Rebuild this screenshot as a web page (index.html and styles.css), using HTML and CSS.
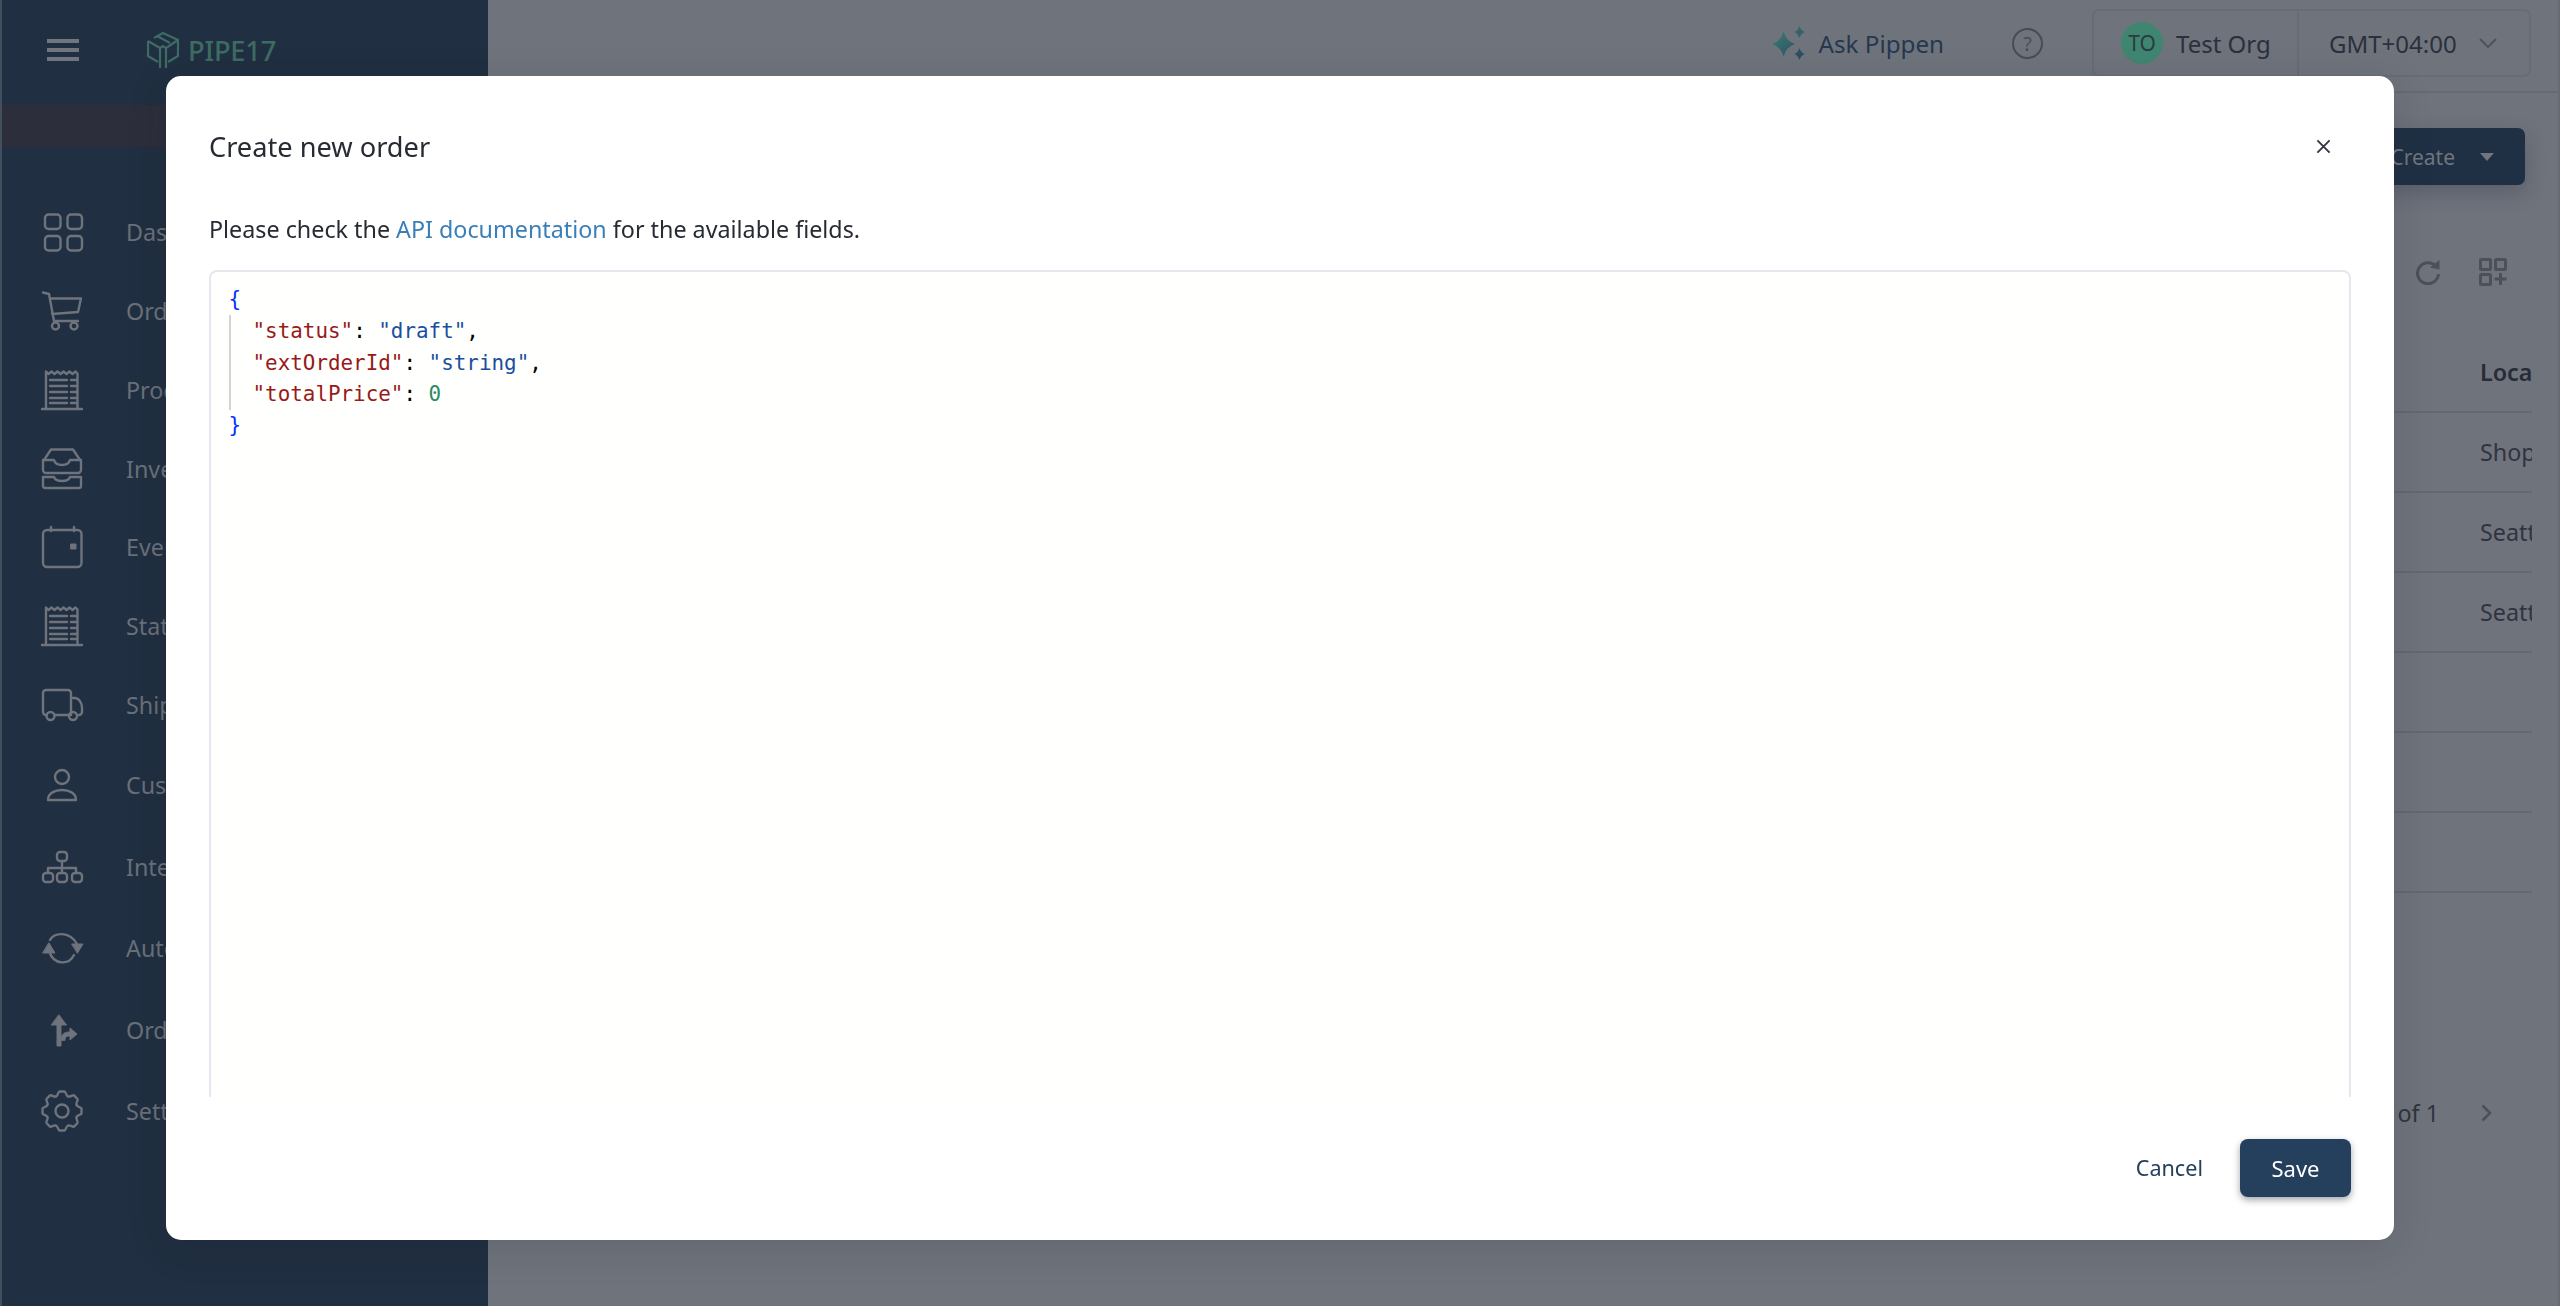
FILE: index.html
```html
<!DOCTYPE html>
<html lang="en">
<head>
<meta charset="utf-8">
<title>Create new order</title>
<link rel="stylesheet" href="styles.css">
</head>
<body>
<aside class="sidebar">
  <div class="brand">
    <div class="burger"><span></span><span></span><span></span></div>
    <div class="logo">
      <svg class="logo-mark" viewBox="0 0 32 37" fill="none" stroke="currentColor" stroke-width="2.2">
        <path d="M7 6 16 1l15 7v16l-10 6M1 9v15l10 6M1 9l12 7v20M31 8l-12 8v20M10 4l13 7M13 16l3-2 3 2"/>
      </svg>
      <span class="logo-text">PIPE17</span>
    </div>
  </div>
  <div class="banner"></div>
  <nav class="nav">
    <a class="nav-item"><svg class="ico" viewBox="0 0 42 42"><rect x="4" y="3.5" width="15.5" height="14.5" rx="3.5"/><rect x="26.5" y="3.5" width="14.5" height="14.5" rx="3.5"/><rect x="4" y="25" width="15.5" height="14.5" rx="3.5"/><rect x="26.5" y="25" width="14.5" height="14.5" rx="3.5"/></svg><span>Dashboard</span></a>
    <a class="nav-item"><svg class="ico" viewBox="0 0 42 42"><path d="M2 2.5 8 4l5 27h24M9 8.500h31L37 22l-26 2"/><circle cx="14.500" cy="36" r="3.500"/><circle cx="33" cy="36" r="3.500"/></svg><span>Orders</span></a>
    <a class="nav-item"><svg class="ico" viewBox="0 0 42 42"><path d="M5 40V2.500l2.500 2.500 3-2.500 3 2.500 3-2.500 3 2.500 3-2.500 3 2.500 3-2.500 3 2.500 3-2.500 2 2V40M1 40h40M9 11h17M9 17h17M9 23h17M9 29h17M9 34h17M30 11h5M30 17h5M30 23h5M30 29h5M30 34h5"/></svg><span>Products</span></a>
    <a class="nav-item"><svg class="ico" viewBox="0 0 42 42"><path d="M3 12 10 1.500h22L39 12"/><path d="M2 12h11c1 4 4 5 8 5s7-1 8-5h11v10a3 3 0 0 1-3 3H5a3 3 0 0 1-3-3zM2 29h11c1 3 4 4 8 4s7-1 8-4h11v9a2 2 0 0 1-2 2H4a2 2 0 0 1-2-2z"/></svg><span>Inventory</span></a>
    <a class="nav-item"><svg class="ico" viewBox="0 0 42 42"><rect x="2" y="4" width="38.500" height="37" rx="4"/><path d="M10 1v4M33 1v4"/><rect class="ico-fill" x="30" y="18" width="5" height="5"/></svg><span>Events</span></a>
    <a class="nav-item"><svg class="ico" viewBox="0 0 42 42"><path d="M5 40V2.500l2.500 2.500 3-2.500 3 2.500 3-2.500 3 2.500 3-2.500 3 2.500 3-2.500 3 2.500 3-2.500 2 2V40M1 40h40M9 11h17M9 17h17M9 23h17M9 29h17M9 34h17M30 11h5M30 17h5M30 23h5M30 29h5M30 34h5"/></svg><span>Statements</span></a>
    <a class="nav-item"><svg class="ico" viewBox="0 0 42 42"><path d="M6 31H5a3 3 0 0 1-3-3V9a3 3 0 0 1 3-3h22a3 3 0 0 1 3 3v22H14M30 14h4c4 0 7 5 7 10v4a3 3 0 0 1-3 3M30 31h-3"/><circle cx="9.500" cy="32" r="4"/><circle cx="32" cy="32" r="4"/></svg><span>Shipments</span></a>
    <a class="nav-item nav-item-wide"><svg class="ico" viewBox="0 0 42 42"><circle cx="21" cy="13" r="7"/><path d="M7 36c0-7 7-10 14-10s14 3 14 10z"/></svg><span>Customers</span></a>
    <a class="nav-item nav-item-wide"><svg class="ico" viewBox="0 0 42 42"><rect x="16" y="6" width="10" height="9" rx="3"/><path d="M21 15v12M7 27v-5h28v5"/><rect x="2" y="27" width="10" height="9" rx="3"/><rect x="16" y="27" width="10" height="9" rx="3"/><rect x="31" y="27" width="10" height="9" rx="3"/></svg><span>Integrations</span></a>
    <a class="nav-item nav-item-wide"><svg class="ico" viewBox="0 0 42 42"><path d="M9 13C13 6 28 3 36 17M8 24c5 15 20 14 25 4"/><path class="ico-fill" d="M31 17h11l-5.500 9zM2 26h12L8 16z"/></svg><span>Automations</span></a>
    <a class="nav-item nav-item-wide"><svg class="ico" viewBox="0 0 42 42"><path class="ico-fill" d="M18 6l7.500 10H20v21h-4V16h-5.500zM20 31c0-5 3-8 8-8h1v-4l7 6-7 6v-4h-1c-3 0-4 1-4 4z"/></svg><span>Order Routing</span></a>
    <a class="nav-item nav-item-wide"><svg class="ico" viewBox="0 0 42 42"><path d="M14.950 6.400C17 6.200 17 1.500 18.500 1.500h5c1.500 0 1.500 4.700 3.550 4.900"/><path transform="rotate(45 21 21)" d="M14.950 6.400C17 6.200 17 1.500 18.500 1.500h5c1.500 0 1.500 4.700 3.550 4.900"/><path transform="rotate(90 21 21)" d="M14.950 6.400C17 6.200 17 1.500 18.500 1.500h5c1.500 0 1.500 4.700 3.550 4.900"/><path transform="rotate(135 21 21)" d="M14.950 6.400C17 6.200 17 1.500 18.500 1.500h5c1.500 0 1.500 4.700 3.550 4.900"/><path transform="rotate(180 21 21)" d="M14.950 6.400C17 6.200 17 1.500 18.500 1.500h5c1.500 0 1.500 4.700 3.550 4.900"/><path transform="rotate(225 21 21)" d="M14.950 6.400C17 6.200 17 1.500 18.500 1.500h5c1.500 0 1.500 4.700 3.550 4.900"/><path transform="rotate(270 21 21)" d="M14.950 6.400C17 6.200 17 1.500 18.500 1.500h5c1.500 0 1.500 4.700 3.550 4.900"/><path transform="rotate(315 21 21)" d="M14.950 6.400C17 6.200 17 1.500 18.500 1.500h5c1.500 0 1.500 4.700 3.550 4.900"/><circle cx="21" cy="21" r="6.500"/></svg><span>Settings</span></a>
  </nav>
</aside>

<main class="main">
  <header class="topbar">
    <div class="ask">
      <svg class="ask-star" viewBox="0 0 30 31">
        <defs><linearGradient id="spark" x1="0" y1="0" x2="1" y2="1"><stop offset="0" stop-color="#3d8272"/><stop offset="1" stop-color="#2b4460"/></linearGradient></defs>
        <path fill="url(#spark)" d="M10.500 5 Q13 14 21 16.500 Q13 19 10.500 28 Q8 19 0 16.500 Q8 14 10.500 5zM25 0q1.200 4.300 5 5.500-3.800 1.200-5 5.500-1.200-4.300-5-5.500 3.800-1.200 5-5.500zM25 20q1.200 4.300 5 5.500-3.800 1.200-5 5.500-1.200-4.300-5-5.500 3.800-1.200 5-5.500z"/>
      </svg>
      <span>Ask Pippen</span>
    </div>
    <div class="help">?</div>
    <div class="org">
      <div class="org-user"><span class="avatar">TO</span><span>Test Org</span></div>
      <div class="org-tz"><span>GMT+04:00</span><svg class="tz-chevron" viewBox="0 0 18 10"><path d="M1 1l8 8 8-8"/></svg></div>
    </div>
  </header>
  <div class="actions">
    <button class="create"><span>Create</span><i class="caret"></i></button>
  </div>
  <div class="tools">
    <svg class="tool tool-refresh" viewBox="0 0 26 26"><path d="M21.500 8A10.500 10.500 0 1 0 23.500 15"/><path class="tool-fill" d="M15 8.500 24.500 1v9.500z"/></svg>
    <svg class="tool tool-grid" viewBox="0 0 28 28"><rect x="1.500" y="1.500" width="10" height="10" rx="1"/><rect x="16.500" y="1.500" width="10" height="10" rx="1"/><rect x="1.500" y="16.500" width="10" height="10" rx="1"/><path d="M21.500 15v12M15.500 21h12"/></svg>
  </div>
  <div class="table">
    <div class="row row-head"><span class="cell">Location</span></div>
    <div class="row"><span class="cell">Shopify</span></div>
    <div class="row"><span class="cell">Seattle</span></div>
    <div class="row"><span class="cell">Seattle</span></div>
    <div class="row"></div>
    <div class="row"></div>
    <div class="row"></div>
  </div>
  <div class="pager"><span>1 of 1</span><svg class="pager-next" viewBox="0 0 11 18"><path d="M1.500 1.500 9 9l-7.500 7.500"/></svg></div>
</main>

<div class="overlay">
  <section class="modal">
    <div class="modal-head">
      <h2 class="modal-title">Create new order</h2>
      <svg class="modal-close" viewBox="0 0 16 16"><path d="M1.500 1.500l13 13M14.500 1.500l-13 13"/></svg>
    </div>
    <p class="modal-note">Please check the <a class="link">API documentation</a> for the available fields.</p>
    <div class="editor">
      <div class="code">
        <div class="ln"><span class="t-br">{</span></div>
        <div class="guide">
          <div class="ln"><span class="t-key">"status"</span>: <span class="t-str">"draft"</span>,</div>
          <div class="ln"><span class="t-key">"extOrderId"</span>: <span class="t-str">"string"</span>,</div>
          <div class="ln"><span class="t-key">"totalPrice"</span>: <span class="t-num">0</span></div>
        </div>
        <div class="ln"><span class="t-br">}</span></div>
      </div>
    </div>
    <div class="modal-foot">
      <button class="btn-cancel">Cancel</button>
      <button class="btn-save">Save</button>
    </div>
  </section>
</div>
</body>
</html>
```

FILE: styles.css
```css
* { box-sizing: border-box; }
html, body { height: 100%; }
body {
  margin: 0;
  display: flex;
  height: 100vh;
  overflow: hidden;
  background: #6f737c;
  font-family: "Noto Sans", "Open Sans", sans-serif;
  font-size: 23.300px;
  color: #2a303c;
}
button { font: inherit; border: 0; background: none; padding: 0; }

/* Sidebar */
.sidebar {
  width: 488px;
  flex: none;
  background: #202f41;
  border-left: 2px solid #444f5e;
  color: #6a7079;
}
.brand { height: 105px; display: flex; align-items: center; padding: 0 0 5px 45px; }
.burger { width: 32px; display: flex; flex-direction: column; gap: 5px; }
.burger span { height: 4px; background: #71757e; }
.logo { display: flex; align-items: center; margin-left: 68px; color: #3e6b63; }
.logo-mark { width: 32px; height: 37px; }
.logo-text { margin-left: 9px; font-size: 27.300px; font-weight: 500; letter-spacing: -.2px; }
.banner { height: 42px; background: #2c2e3c; }
.nav { padding-top: 45.400px; }
.nav-item { height: 78.900px; display: flex; align-items: center; padding-left: 39px; gap: 43px; white-space: nowrap; }
.nav-item-wide { height: 81.500px; }
.ico { width: 42px; height: 42px; flex: none; fill: none; stroke: #6e737c; stroke-width: 2.4; stroke-linejoin: round; stroke-linecap: round; overflow: visible; }
.ico-fill { fill: #6e737c; stroke-width: 1; }

/* Main, dimmed behind the dialog */
.main { flex: 1; min-width: 0; display: flex; flex-direction: column; border-right: 2px solid #666a72; }
.topbar { height: 93px; flex: none; display: flex; align-items: flex-start; justify-content: flex-end; padding: 9px 27px 0 0; border-bottom: 2px solid #666a72; font-size: 24px; }
.ask { height: 68px; display: flex; align-items: center; gap: 14px; color: #25384f; font-size: 24.200px; }
.ask-star { width: 33px; height: 34px; }
.help { width: 31px; height: 31px; margin: 19px 49px 0 68px; border: 2px solid #474c58; border-radius: 50%; display: flex; align-items: center; justify-content: center; font-size: 19px; color: #474c58; }
.org { width: 439px; height: 68px; display: flex; border: 2px solid #686c74; border-radius: 7px; }
.org-user { width: 205px; display: flex; align-items: center; gap: 13px; padding-left: 27px; border-right: 2px solid #686c74; }
.avatar { width: 42px; height: 42px; border-radius: 50%; background: #3f8671; display: flex; align-items: center; justify-content: center; font-size: 21px; color: #2e3a3f; }
.org-tz { flex: 1; display: flex; align-items: center; gap: 22px; padding-left: 30px; }
.tz-chevron { width: 18px; height: 10px; fill: none; stroke: #4d525d; stroke-width: 2; }
.actions { display: flex; justify-content: flex-end; padding: 35px 33px 0 0; }
.create { width: 300px; height: 57px; display: flex; align-items: center; justify-content: flex-end; gap: 25px; padding-right: 31px; background: #203044; border-radius: 7px; color: #70757e; font-size: 21px; box-shadow: 0 8px 20px rgba(30,35,50,.25); }
.caret { width: 0; height: 0; border-left: 7px solid transparent; border-right: 7px solid transparent; border-top: 8px solid #70757e; }
.tools { display: flex; justify-content: flex-end; align-items: center; gap: 38px; padding: 73px 51px 0 0; }
.tool { fill: none; stroke: #4b505a; stroke-width: 3; }
.tool-refresh { width: 26px; height: 26px; }
.tool-grid { width: 28px; height: 28px; }
.tool-fill { fill: #4b505a; stroke: none; }
.table { margin: 47px 26px 0 40px; }
.row { height: 80px; display: flex; justify-content: flex-end; align-items: center; border-bottom: 2px solid #65696f; }
.row-head { height: 80px; font-weight: 600; }
.cell { width: 52px; overflow: hidden; white-space: nowrap; color: #2f3440; }
.row-head .cell { color: #272c38; }
.pager { display: flex; justify-content: flex-end; align-items: center; gap: 42px; padding: 204px 66px 0 0; color: #2f3440; white-space: nowrap; }
.pager-next { width: 11px; height: 18px; fill: none; stroke: #4b505a; stroke-width: 2.5; }

/* Dialog */
.overlay { position: fixed; inset: 0; display: flex; justify-content: center; align-items: flex-start; padding-top: 76px; }
.modal { width: 2228px; height: 1164px; display: flex; flex-direction: column; padding: 0 43px; background: #fff; border-radius: 15px; box-shadow: 0 8px 40px rgba(20,25,35,.14); }
.modal-head { height: 137px; flex: none; display: flex; justify-content: space-between; align-items: center; padding-top: 3px; }
.modal-title { margin: 0; font-size: 27.200px; font-weight: 400; color: #272b33; }
.modal-close { width: 15px; height: 15px; margin-right: 20px; fill: none; stroke: #33373f; stroke-width: 2; }
.modal-note { margin: 0; height: 57px; flex: none; color: #272b33; }
.link { color: #3a7fb8; }
.editor { flex: 1; min-height: 0; overflow: hidden; }
.code { height: 900px; padding: 12px 17.500px; background: #fffffd; border: 2px solid #e6e7ee; border-radius: 8px; font-family: "DejaVu Sans Mono", monospace; font-size: 20.900px; color: #000; }
.ln { height: 31.300px; line-height: 31.300px; white-space: pre; }
.guide { border-left: 2px solid #d3d3d3; padding: 1px 0 0 22px; }
.t-br { color: #0431fa; }
.t-key { color: #981a1a; }
.t-str { color: #1a4fa0; }
.t-num { color: #2b8a5f; }
.modal-foot { height: 143px; flex: none; display: flex; justify-content: flex-end; align-items: flex-start; gap: 37px; padding-top: 42px; }
.btn-cancel { height: 56px; color: #24405c; font-size: 21.600px; }
.btn-save { width: 111px; height: 58px; background: #24405c; color: #fff; border-radius: 8px; font-size: 22px; box-shadow: 0 3px 7px rgba(20,30,45,.4); }
```
